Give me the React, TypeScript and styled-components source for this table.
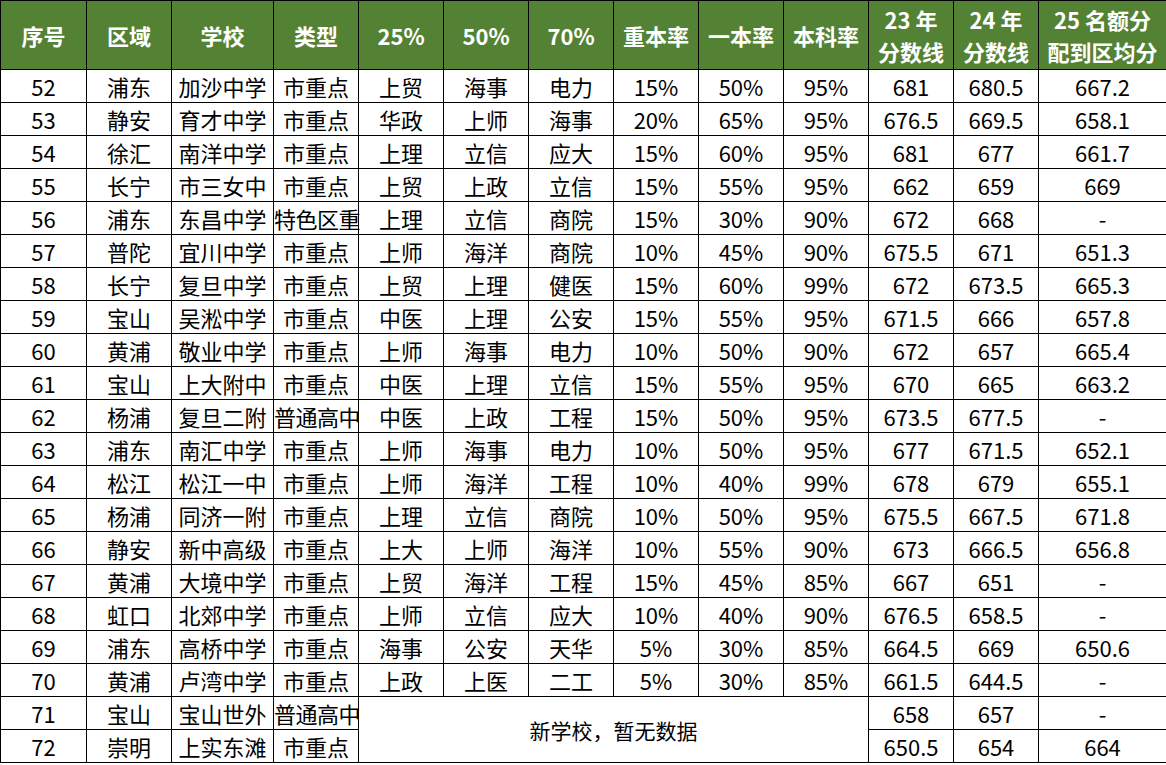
import React from 'react';
import styled, { createGlobalStyle } from 'styled-components';

const GlobalStyle = createGlobalStyle`
  html, body {
    margin: 0;
    padding: 0;
    background: #fff;
  }
  body {
    font-family: "Noto Sans CJK SC", "Noto Sans", sans-serif;
  }
`;

type Row = string[];

const rows: Row[] = [
  ['52', '浦东', '加沙中学', '市重点', '上贸', '海事', '电力', '15%', '50%', '95%', '681', '680.5', '667.2'],
  ['53', '静安', '育才中学', '市重点', '华政', '上师', '海事', '20%', '65%', '95%', '676.5', '669.5', '658.1'],
  ['54', '徐汇', '南洋中学', '市重点', '上理', '立信', '应大', '15%', '60%', '95%', '681', '677', '661.7'],
  ['55', '长宁', '市三女中', '市重点', '上贸', '上政', '立信', '15%', '55%', '95%', '662', '659', '669'],
  ['56', '浦东', '东昌中学', '特色区重', '上理', '立信', '商院', '15%', '30%', '90%', '672', '668', '-'],
  ['57', '普陀', '宜川中学', '市重点', '上师', '海洋', '商院', '10%', '45%', '90%', '675.5', '671', '651.3'],
  ['58', '长宁', '复旦中学', '市重点', '上贸', '上理', '健医', '15%', '60%', '99%', '672', '673.5', '665.3'],
  ['59', '宝山', '吴淞中学', '市重点', '中医', '上理', '公安', '15%', '55%', '95%', '671.5', '666', '657.8'],
  ['60', '黄浦', '敬业中学', '市重点', '上师', '海事', '电力', '10%', '50%', '90%', '672', '657', '665.4'],
  ['61', '宝山', '上大附中', '市重点', '中医', '上理', '立信', '15%', '55%', '95%', '670', '665', '663.2'],
  ['62', '杨浦', '复旦二附', '普通高中', '中医', '上政', '工程', '15%', '50%', '95%', '673.5', '677.5', '-'],
  ['63', '浦东', '南汇中学', '市重点', '上师', '海事', '电力', '10%', '50%', '95%', '677', '671.5', '652.1'],
  ['64', '松江', '松江一中', '市重点', '上师', '海洋', '工程', '10%', '40%', '99%', '678', '679', '655.1'],
  ['65', '杨浦', '同济一附', '市重点', '上理', '立信', '商院', '10%', '50%', '95%', '675.5', '667.5', '671.8'],
  ['66', '静安', '新中高级', '市重点', '上大', '上师', '海洋', '10%', '55%', '90%', '673', '666.5', '656.8'],
  ['67', '黄浦', '大境中学', '市重点', '上贸', '海洋', '工程', '15%', '45%', '85%', '667', '651', '-'],
  ['68', '虹口', '北郊中学', '市重点', '上师', '立信', '应大', '10%', '40%', '90%', '676.5', '658.5', '-'],
  ['69', '浦东', '高桥中学', '市重点', '海事', '公安', '天华', '5%', '30%', '85%', '664.5', '669', '650.6'],
  ['70', '黄浦', '卢湾中学', '市重点', '上政', '上医', '二工', '5%', '30%', '85%', '661.5', '644.5', '-'],
];

const newSchools: Row[] = [
  ['71', '宝山', '宝山世外', '普通高中', '658', '657', '-'],
  ['72', '崇明', '上实东滩', '市重点', '650.5', '654', '664'],
];

const widths = [86, 85, 102, 85, 85, 85, 85, 85, 85, 85, 85, 85, 128];

const headers: React.ReactNode[] = [
  '序号', '区域', '学校', '类型', '25%', '50%', '70%', '重本率', '一本率', '本科率',
  <>23 年<br />分数线</>,
  <>24 年<br />分数线</>,
  <>25 名额分<br />配到区均分</>,
];

const Table = styled.table`
  width: 1166px;
  table-layout: fixed;
  border-collapse: collapse;
  color: #000;
  font-size: 22px;
`;

const HeadRow = styled.tr`
  height: 69px;
`;

const HeadCell = styled.th`
  background: #548235;
  color: #fff;
  font-weight: 700;
  line-height: 32px;
  text-align: center;
  border: 1px solid #000;
  padding: 0;
`;

const BodyRow = styled.tr`
  height: 33px;
`;

const Cell = styled.td<{ $tight?: boolean }>`
  border: 1px solid #000;
  padding: 0;
  text-align: center;
  line-height: 30px;
  white-space: nowrap;
  letter-spacing: ${(p) => (p.$tight ? '-0.5px' : '0')};
`;

const Note = styled(Cell)`
  font-size: 21px;
`;

const isLong = (s: string) => s.length >= 4;

export default function App() {
  return (
    <>
      <GlobalStyle />
      <Table>
        <colgroup>
          {widths.map((w, i) => (
            <col key={i} style={{ width: w }} />
          ))}
        </colgroup>
        <thead>
          <HeadRow>
            {headers.map((h, i) => (
              <HeadCell key={i}>{h}</HeadCell>
            ))}
          </HeadRow>
        </thead>
        <tbody>
          {rows.map((r) => (
            <BodyRow key={r[0]}>
              {r.map((v, i) => (
                <Cell key={i} $tight={i === 3 && isLong(v)}>{v}</Cell>
              ))}
            </BodyRow>
          ))}
          {newSchools.map((r, ri) => (
            <BodyRow key={r[0]}>
              {r.slice(0, 4).map((v, i) => (
                <Cell key={i} $tight={i === 3 && isLong(v)}>{v}</Cell>
              ))}
              {ri === 0 && (
                <Note colSpan={6} rowSpan={2}>新学校，暂无数据</Note>
              )}
              {r.slice(4).map((v, i) => (
                <Cell key={'s' + i}>{v}</Cell>
              ))}
            </BodyRow>
          ))}
        </tbody>
      </Table>
    </>
  );
}
